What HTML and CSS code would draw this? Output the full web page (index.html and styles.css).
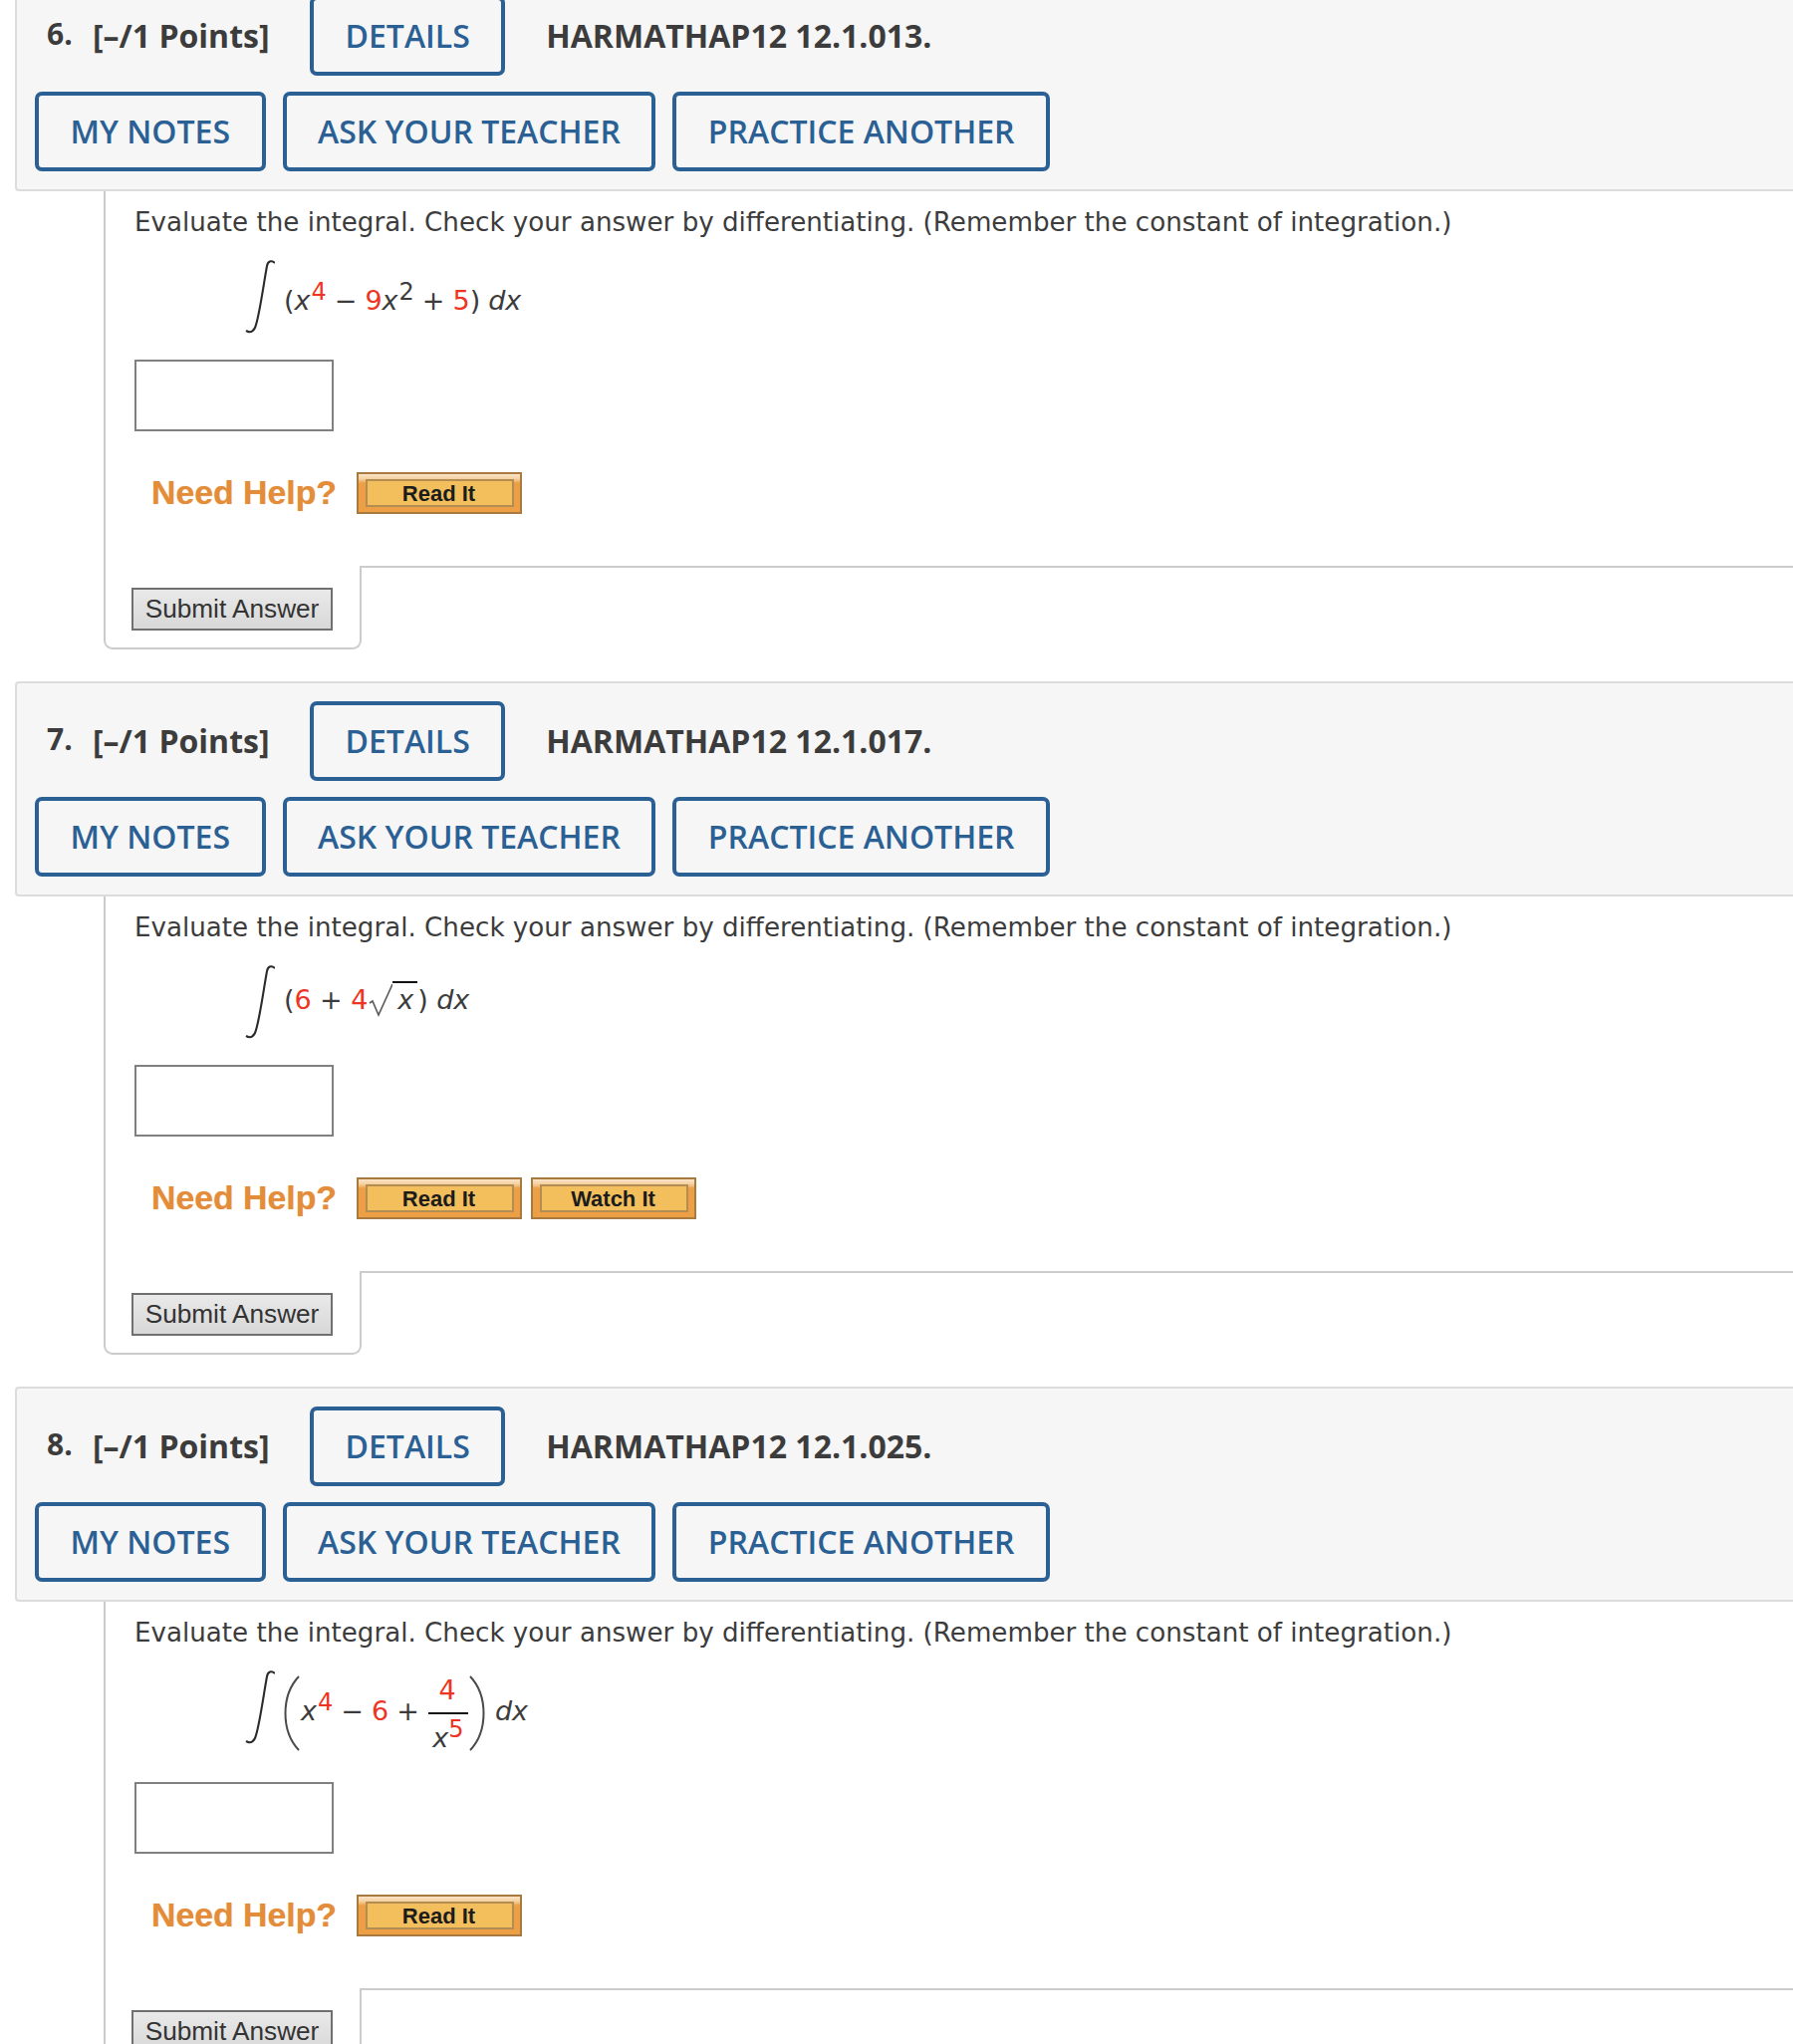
FILE: index.html
```html
<!DOCTYPE html>
<html lang="en">
<head>
<meta charset="utf-8">
<title>Questions</title>
<link rel="stylesheet" href="styles.css">
</head>
<body>
<main class="page">
  <div class="scrolled">

    <section class="question">
      <header class="qhead">
        <div class="qrow">
          <span class="qnum">6.</span>
          <span class="qpoints">[–/1 Points]</span>
          <a class="btn btn-details">DETAILS</a>
          <span class="qcode">HARMATHAP12 12.1.013.</span>
        </div>
        <div class="qrow qrow-actions">
          <a class="btn">MY NOTES</a>
          <a class="btn">ASK YOUR TEACHER</a>
          <a class="btn">PRACTICE ANOTHER</a>
        </div>
      </header>
      <div class="qbody">
        <div class="prompt">
          <p class="instructions">Evaluate the integral. Check your answer by differentiating. (Remember the constant of integration.)</p>
          <div class="math">
            <svg class="integral" viewBox="0 0 30 74" width="30" height="74"><path d="M30 3C26 0 23 1 22 6C19 22 15 52 11 65C9.500 71 6 74 1 71" fill="none" stroke="#2b2b2b" stroke-width="2.100"/></svg>
            <span class="expr expr-a">(<i>x</i><sup class="red">4</sup> − <span class="red">9</span><i>x</i><sup>2</sup> + <span class="red">5</span>) <i>dx</i></span>
          </div>
          <input class="answer" type="text" aria-label="Answer">
          <div class="help">
            <span class="help-label">Need Help?</span>
            <a class="help-btn"><span>Read It</span></a>
          </div>
        </div>
        <div class="foot">
          <div class="submit-cell"><button class="submit" type="button">Submit Answer</button></div>
          <div class="foot-rest"></div>
        </div>
      </div>
    </section>

    <section class="question">
      <header class="qhead">
        <div class="qrow">
          <span class="qnum">7.</span>
          <span class="qpoints">[–/1 Points]</span>
          <a class="btn btn-details">DETAILS</a>
          <span class="qcode">HARMATHAP12 12.1.017.</span>
        </div>
        <div class="qrow qrow-actions">
          <a class="btn">MY NOTES</a>
          <a class="btn">ASK YOUR TEACHER</a>
          <a class="btn">PRACTICE ANOTHER</a>
        </div>
      </header>
      <div class="qbody">
        <div class="prompt">
          <p class="instructions">Evaluate the integral. Check your answer by differentiating. (Remember the constant of integration.)</p>
          <div class="math">
            <svg class="integral" viewBox="0 0 30 74" width="30" height="74"><path d="M30 3C26 0 23 1 22 6C19 22 15 52 11 65C9.500 71 6 74 1 71" fill="none" stroke="#2b2b2b" stroke-width="2.100"/></svg>
            <span class="expr expr-b">(<span class="red">6</span> + <span class="red">4</span><svg class="radical" viewBox="0 0 24 34" width="24" height="34"><path d="M1 20L4 18L10 32L24 1" fill="none" stroke="#5a5a5a" stroke-width="1.600"/></svg><span class="radicand"><i>x</i></span>) <i>dx</i></span>
          </div>
          <input class="answer" type="text" aria-label="Answer">
          <div class="help">
            <span class="help-label">Need Help?</span>
            <a class="help-btn"><span>Read It</span></a>
            <a class="help-btn"><span>Watch It</span></a>
          </div>
        </div>
        <div class="foot">
          <div class="submit-cell"><button class="submit" type="button">Submit Answer</button></div>
          <div class="foot-rest"></div>
        </div>
      </div>
    </section>

    <section class="question">
      <header class="qhead">
        <div class="qrow">
          <span class="qnum">8.</span>
          <span class="qpoints">[–/1 Points]</span>
          <a class="btn btn-details">DETAILS</a>
          <span class="qcode">HARMATHAP12 12.1.025.</span>
        </div>
        <div class="qrow qrow-actions">
          <a class="btn">MY NOTES</a>
          <a class="btn">ASK YOUR TEACHER</a>
          <a class="btn">PRACTICE ANOTHER</a>
        </div>
      </header>
      <div class="qbody">
        <div class="prompt">
          <p class="instructions">Evaluate the integral. Check your answer by differentiating. (Remember the constant of integration.)</p>
          <div class="math math-tall">
            <svg class="integral" viewBox="0 0 30 74" width="30" height="74"><path d="M30 3C26 0 23 1 22 6C19 22 15 52 11 65C9.500 71 6 74 1 71" fill="none" stroke="#2b2b2b" stroke-width="2.100"/></svg>
            <svg class="paren paren-open" viewBox="0 0 16 76" width="16" height="76"><path d="M15 1C-3 20 -3 56 15 75" fill="none" stroke="#4a4a4a" stroke-width="2"/></svg>
            <span class="expr expr-c"><i>x</i><sup class="red">4</sup> − <span class="red">6</span> +</span>
            <span class="frac"><span class="frac-top red">4</span><span class="frac-bottom"><i>x</i><sup class="red">5</sup></span></span>
            <svg class="paren paren-close" viewBox="0 0 16 76" width="16" height="76"><path d="M1 1C19 20 19 56 1 75" fill="none" stroke="#4a4a4a" stroke-width="2"/></svg>
            <span class="expr expr-d"><i>dx</i></span>
          </div>
          <input class="answer" type="text" aria-label="Answer">
          <div class="help">
            <span class="help-label">Need Help?</span>
            <a class="help-btn"><span>Read It</span></a>
          </div>
        </div>
        <div class="foot">
          <div class="submit-cell"><button class="submit" type="button">Submit Answer</button></div>
          <div class="foot-rest"></div>
        </div>
      </div>
    </section>

  </div>
</main>
</body>
</html>
```

FILE: styles.css
```css
* { box-sizing: border-box; }
html, body { margin: 0; padding: 0; background: #fff; }
.page { width: 1800px; height: 2052px; overflow: hidden; }
.scrolled { margin-top: -24px; padding-left: 15px; }

.question { margin-bottom: 32px; }

.qhead {
  height: 216px;
  background: #f6f6f6;
  border: 2px solid #dcdcdc;
  border-right: 0;
  border-radius: 4px 0 0 4px;
  padding: 18px 0;
  font-family: "Open Sans", sans-serif;
  color: #3c3c3c;
}
.qrow { display: flex; align-items: center; height: 80px; padding-left: 30px; }
.qrow-actions { margin-top: 16px; padding-left: 18px; gap: 17px; }
.qnum { font-size: 30px; font-weight: 700; width: 46px; margin-bottom: 5px; }
.qpoints { font-size: 32px; font-weight: 700; width: 218px; white-space: nowrap; margin-bottom: 2px; }
.qcode { font-size: 32px; font-weight: 700; margin: 0 0 2px 41px; white-space: nowrap; }

.btn {
  display: flex; align-items: center; justify-content: center;
  height: 80px; padding: 0 31.500px 2px;
  border: 4px solid #2a6094;
  border-radius: 7px;
  color: #2a6094;
  font-size: 32px; font-weight: 600;
  white-space: nowrap;
}

.qbody { margin-left: 89px; }
.prompt {
  border-left: 2px solid #cccccc;
  padding: 16px 0 52px 29px;
  font-family: "DejaVu Sans", sans-serif;
  color: #3c3c3c;
}
.instructions { margin: 0; font-size: 26.150px; line-height: 30px; white-space: nowrap; }

.math { display: flex; height: 74px; margin: 23px 0 26px 111px; position: relative; }
.math-tall { height: 86px; }
.integral { display: block; flex: none; }
.expr { font-size: 27px; line-height: 32px; white-space: nowrap; }
.expr sup { font-size: 24px; line-height: 0; vertical-align: 10px; margin-left: 1px; }
.expr-a { margin: 25px 0 0 9px; word-spacing: -0.600px; }
.expr-b { margin: 18px 0 0 9px; word-spacing: -0.200px; }
.expr-c { margin: 25px 0 0 1px; word-spacing: -0.500px; }
.expr-d { margin: 25px 0 0 10px; }
.red { color: #ee3524; }
.radical { vertical-align: -8px; margin-left: 1px; }
.radicand { border-top: 2px solid #111; padding: 1px 4px 0 5px; }

.paren { flex: none; margin-top: 5px; }
.paren-open { margin-left: 9px; }
.frac { display: flex; flex-direction: column; align-items: center; width: 40px; margin-left: 9px; font-size: 27px; }
.frac-top { line-height: 32px; height: 44px; padding: 4px 2px 0 0; border-bottom: 2px solid #111; width: 100%; text-align: center; }
.frac-bottom { line-height: 32px; padding-top: 8px; white-space: nowrap; }
.frac-bottom sup { font-size: 24px; line-height: 0; vertical-align: 10px; }
.paren-close { margin-left: 1px; }

.answer {
  display: block; width: 200px; height: 72px;
  border: 2px solid #808080; border-radius: 0;
  background: #fff; padding: 0; margin: 0;
}

.help { display: flex; align-items: center; height: 42px; margin-top: 41px; padding-left: 17px; gap: 9px; font-family: "Liberation Sans", sans-serif; }
.help-label {
  width: 197px; margin-top: -2px;
  font-size: 33.800px; font-weight: 700; color: #e38c3a; white-space: nowrap;
  text-shadow: 0 0 1px rgba(227,140,58,.6);
}
.help-btn {
  display: block; width: 166px; height: 42px; padding: 5px 6px 5px 7px;
  border: 2px solid #a97a3f;
  background: linear-gradient(#f9e4c8 0, #f5cf9c 5px, #ed9f45 9px);
}
.help-btn span {
  display: block; height: 28px; line-height: 25px; text-align: center; padding-right: 2px;
  background: #f2bf5c; border: 2px solid #b48d55;
  font-size: 22px; font-weight: 700; color: #1c1c1c;
}

.foot { display: flex; height: 84px; }
.submit-cell {
  width: 259px; flex: none;
  border: 2px solid #cccccc; border-top: 0;
  border-radius: 0 0 9px 9px;
  padding: 22px 0 0 26px;
}
.foot-rest { flex: 1; border-top: 2px solid #cccccc; margin-left: -2px; }
.submit {
  display: block; width: 202px; height: 43px; padding: 0; margin: 0;
  border: 2px solid #707070; border-radius: 0;
  background: linear-gradient(#e9e9e9, #d8d8d8);
  font-family: "Liberation Sans", sans-serif; font-size: 26.200px; color: #333;
}
```
